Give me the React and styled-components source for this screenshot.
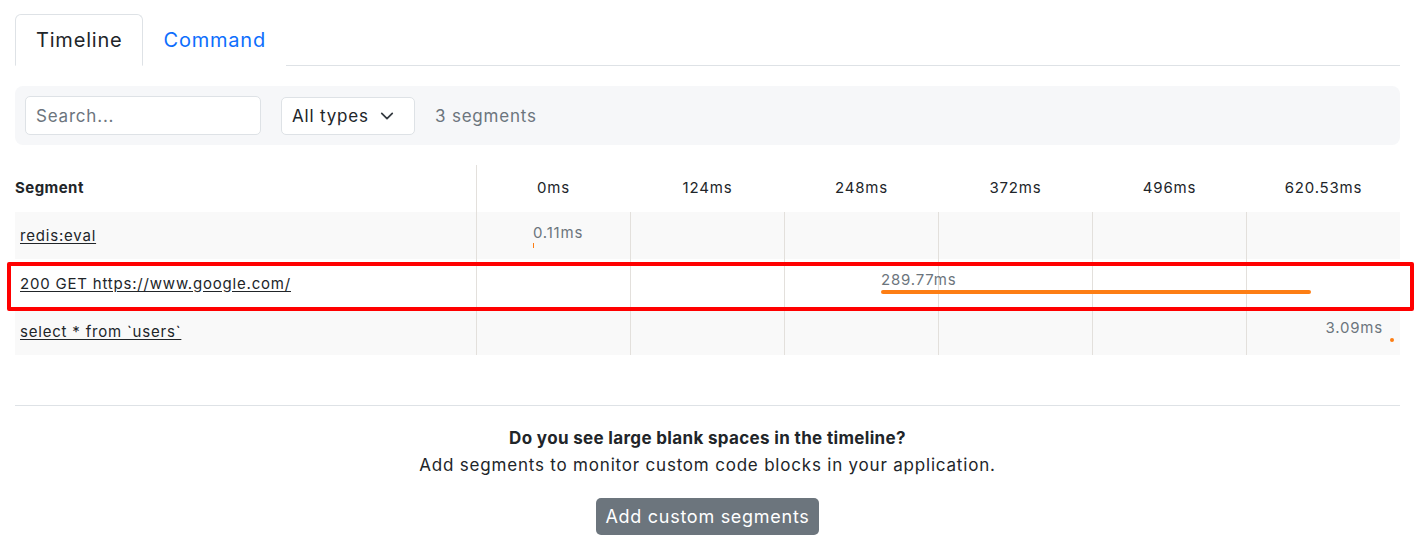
import React from "react";
import styled, { createGlobalStyle } from "styled-components";

const GlobalStyle = createGlobalStyle`
  body {
    margin: 0;
    background: #fff;
    font-family: Inter, "Noto Sans", sans-serif;
    letter-spacing: 0.05em;
    color: #212529;
  }
`;

const Page = styled.div`
  position: relative;
  width: 1385px;
  padding: 14px 18px 20px 15px;
`;

const Tabs = styled.div`
  display: flex;
  border-bottom: 1px solid #dee2e6;
`;

const Tab = styled.div`
  height: 50px;
  padding: 0 19px 0 20px;
  display: flex;
  align-items: center;
  font-size: 20px;
  margin-bottom: -1px;
  border: 1px solid ${(p) => (p.$active ? "#dee2e6" : "transparent")};
  border-bottom-color: ${(p) => (p.$active ? "#fff" : "transparent")};
  border-radius: 6px 6px 0 0;
  background: #fff;
  color: ${(p) => (p.$active ? "#212529" : "#0d6efd")};
`;

const FilterBar = styled.div`
  margin-top: 20px;
  height: 59px;
  box-sizing: border-box;
  padding: 0 10px;
  display: flex;
  align-items: center;
  gap: 20px;
  background: #f6f7f9;
  border-radius: 8px;
`;

const SearchInput = styled.input`
  width: 236px;
  height: 39px;
  box-sizing: border-box;
  border: 1px solid #dee2e6;
  border-radius: 5px;
  padding: 0 10px;
  font-family: inherit;
  letter-spacing: inherit;
  font-size: 17px;
  color: #212529;
  background: #fff;
  outline: none;
  &::placeholder {
    color: #6c757d;
  }
`;

const Select = styled.div`
  width: 134px;
  height: 38px;
  box-sizing: border-box;
  border: 1px solid #dee2e6;
  border-radius: 5px;
  padding: 0 20px 0 10px;
  background: #fff;
  display: flex;
  align-items: center;
  justify-content: space-between;
  font-size: 17px;
`;

const Count = styled.span`
  font-size: 17px;
  color: #6c757d;
`;

const Table = styled.div`
  margin-top: 20px;
`;

const Row = styled.div`
  display: grid;
  grid-template-columns: 461px 1fr;
  height: ${(p) => p.$height}px;
  background: ${(p) => (p.$striped ? "#f9f9f9" : "#fff")};
`;

const HeadCell = styled.div`
  display: flex;
  align-items: center;
  padding-bottom: 2px;
  font-size: 15px;
  font-weight: 700;
  letter-spacing: 0.03em;
`;

const NameCell = styled.div`
  display: flex;
  align-items: center;
  padding-left: 5px;
  font-size: 15px;
  a {
    color: #212529;
    text-decoration: underline;
    text-underline-offset: 2px;
  }
`;

const Timeline = styled.div`
  position: relative;
  display: grid;
  grid-template-columns: repeat(6, 1fr);
`;

const Tick = styled.div`
  display: flex;
  align-items: center;
  justify-content: center;
  padding-bottom: 2px;
  font-size: 15px;
  color: #212529;
  border-left: 1px solid ${(p) => (p.$line ? "#e3e0dc" : "transparent")};
`;

const GridCol = styled.div`
  border-left: 1px solid #e3e0dc;
`;

const Label = styled.span`
  position: absolute;
  top: 12px;
  line-height: 18px;
  font-size: 15px;
  color: #6c757d;
  white-space: nowrap;
`;

const Bar = styled.span`
  position: absolute;
  top: 31px;
  height: ${(p) => (p.$tiny ? "5px" : "4px")};
  min-width: 1px;
  border-radius: ${(p) => (p.$tiny ? "0" : "3px")};
  background: #fd7e14;
`;

const Divider = styled.hr`
  margin: 50px 0 0;
  border: 0;
  border-top: 1px solid #dee2e6;
`;

const Hint = styled.div`
  display: flex;
  flex-direction: column;
  align-items: center;
  padding-top: 19px;
  font-size: 17px;
  line-height: 27px;
`;

const HintTitle = styled.div`
  font-weight: 700;
  letter-spacing: 0.02em;
`;

const Button = styled.button`
  margin-top: 19px;
  height: 37px;
  padding: 0 9px;
  border: 0;
  border-radius: 5px;
  background: #6c757d;
  color: #fff;
  font-family: inherit;
  letter-spacing: 0.04em;
  font-size: 18px;
`;

const Highlight = styled.div`
  position: absolute;
  left: 7px;
  top: 262px;
  width: 1399px;
  height: 41px;
  border: 4px solid #ff0000;
  border-radius: 2px;
  pointer-events: none;
`;

const ticks = ["0ms", "124ms", "248ms", "372ms", "496ms", "620.53ms"];

const segments = [
  { name: "redis:eval", label: "0.11ms", left: 57, width: 1, tiny: true, height: 47 },
  { name: "200 GET https://www.google.com/", label: "289.77ms", left: 405, width: 430, height: 48 },
  { name: "select * from `users`", label: "3.09ms", left: 914, width: 4, dot: true, height: 48 },
];

const Chevron = () => (
  <svg width="14" height="14" viewBox="0 0 16 16" fill="none">
    <path d="M2 5l6 6 6-6" stroke="#343a40" strokeWidth="2" strokeLinecap="round" strokeLinejoin="round" />
  </svg>
);

export default function App() {
  return (
    <Page>
      <GlobalStyle />
      <Tabs>
        <Tab $active>Timeline</Tab>
        <Tab>Command</Tab>
      </Tabs>
      <FilterBar>
        <SearchInput placeholder="Search..." />
        <Select>
          All types
          <Chevron />
        </Select>
        <Count>3 segments</Count>
      </FilterBar>
      <Table>
        <Row $height={47}>
          <HeadCell>Segment</HeadCell>
          <Timeline>
            {ticks.map((t, i) => (
              <Tick key={t} $line={i === 0}>
                {t}
              </Tick>
            ))}
          </Timeline>
        </Row>
        {segments.map((s, i) => {
          const left = (s.left / 924) * 100;
          const nearEnd = left > 80 && s.width < 20;
          return (
            <Row key={s.name} $height={s.height} $striped={i % 2 === 0}>
              <NameCell>
                <a href="#">{s.name}</a>
              </NameCell>
              <Timeline>
                {ticks.map((t) => (
                  <GridCol key={t} />
                ))}
                {nearEnd ? (
                  <Label style={{ right: 17 }}>{s.label}</Label>
                ) : (
                  <Label style={{ left: `${left}%` }}>{s.label}</Label>
                )}
                <Bar
                  $tiny={s.tiny}
                  style={{
                    left: `${left}%`,
                    width: s.dot ? 4 : `${(s.width / 924) * 100}%`,
                    borderRadius: s.dot ? "50%" : undefined,
                  }}
                />
              </Timeline>
            </Row>
          );
        })}
      </Table>
      <Divider />
      <Hint>
        <HintTitle>Do you see large blank spaces in the timeline?</HintTitle>
        <div>Add segments to monitor custom code blocks in your application.</div>
        <Button>Add custom segments</Button>
      </Hint>
      <Highlight />
    </Page>
  );
}
